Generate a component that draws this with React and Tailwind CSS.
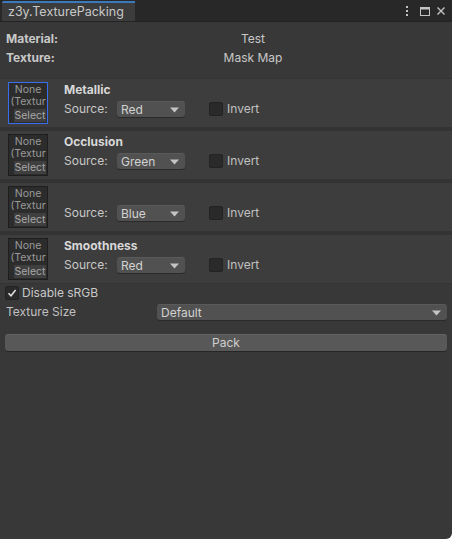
import { useState } from "react";

const channels = [
  { title: "Metallic", source: "Red", selected: true },
  { title: "Occlusion", source: "Green" },
  { title: "", source: "Blue" },
  { title: "Smoothness", source: "Red" },
];

function Arrow() {
  return (
    <svg width="9" height="6" viewBox="0 0 9 6" className="shrink-0">
      <path d="M0 0.5 L9 0.5 L4.5 5.5 Z" fill="#c4c4c4" />
    </svg>
  );
}

function Dropdown({ value, className }) {
  return (
    <div
      className={`flex h-[16px] items-center justify-between rounded-[3px] border-t border-[#5a5a5a] bg-[#515151] pl-[4px] pr-[6px] text-[#d2d2d2] shadow-[0_1px_0_#2a2a2a] ${className}`}
    >
      <span className="leading-none">{value}</span>
      <Arrow />
    </div>
  );
}

function Checkbox({ checked }) {
  return (
    <div className="flex h-[14px] w-[14px] items-center justify-center rounded-[2px] border border-[#232323] bg-[#2a2a2a]">
      {checked && (
        <svg width="10" height="10" viewBox="0 0 10 10">
          <path d="M1.5 5.2 L4 7.8 L8.6 2" stroke="#e0e0e0" strokeWidth="1.5" fill="none" />
        </svg>
      )}
    </div>
  );
}

function Thumb({ selected }) {
  return (
    <div
      className={`relative flex h-[42px] w-[40px] shrink-0 flex-col items-center overflow-hidden border bg-[#2c2c2c] text-[10.5px] leading-[12px] text-[#9a9a9a] ${
        selected ? "border-[#3a6ef0]" : "border-[#1e1e1e]"
      }`}
    >
      <span className="mt-[1px]">None</span>
      <span className="whitespace-nowrap">(Textur</span>
      <div className="absolute bottom-[1px] right-[1px] left-[5px] flex h-[13px] items-center justify-center bg-[#3f3f3f] text-[#a8a8a8]">
        Select
      </div>
    </div>
  );
}

function ChannelRow({ channel }) {
  return (
    <div className="flex h-[48px] items-center bg-[#3d3d3d] pl-[8px]">
      <Thumb selected={channel.selected} />
      <div className="ml-[16px] flex flex-col self-start pt-[3px]">
        <div className="h-[16px] font-bold leading-[16px] text-[#d8d8d8]">
          {channel.title}
        </div>
        <div className="mt-[3px] flex h-[16px] items-center">
          <span className="w-[53px] text-[#c8c8c8]">Source:</span>
          <Dropdown value={channel.source} className="w-[68px]" />
          <div className="ml-[24px]">
            <Checkbox />
          </div>
          <span className="ml-[4px] text-[#c0c0c0]">Invert</span>
        </div>
      </div>
    </div>
  );
}

export default function App() {
  const [srgb] = useState(true);

  return (
    <div
      className="flex h-[539px] w-[452px] flex-col overflow-hidden rounded-br-[6px] bg-[#383838] text-[12px] text-[#c4c4c4]"
      style={{ fontFamily: "Inter, 'Noto Sans', sans-serif" }}
    >
      {/* title bar */}
      <div className="flex h-[22px] shrink-0 items-end justify-between border-b border-[#232323] bg-[#282828]">
        <div className="ml-[2px] flex h-[20px] w-[133px] flex-col rounded-tl-[3px] bg-[#3c3c3c]">
          <div className="h-[2px] rounded-tl-[3px] bg-[#3a79bb]" />
          <span className="pl-[6px] pt-[1px] text-[12.5px] leading-[16px] text-[#c8c8c8]">
            z3y.TexturePacking
          </span>
        </div>
        <div className="mb-[5px] mr-[7px] flex items-center">
          <svg width="2" height="10" viewBox="0 0 2 10">
            <rect x="0" y="0" width="2" height="2" fill="#c4c4c4" />
            <rect x="0" y="4" width="2" height="2" fill="#c4c4c4" />
            <rect x="0" y="8" width="2" height="2" fill="#c4c4c4" />
          </svg>
          <svg width="10" height="9" viewBox="0 0 10 9" className="ml-[12px]">
            <rect x="0.5" y="0.5" width="9" height="8" stroke="#c4c4c4" fill="none" />
            <rect x="0.5" y="0.5" width="9" height="2" fill="#c4c4c4" />
          </svg>
          <svg width="8" height="8" viewBox="0 0 8 8" className="ml-[7px]">
            <path d="M0.5 0.5 L7.5 7.5 M7.5 0.5 L0.5 7.5" stroke="#c4c4c4" strokeWidth="1.4" />
          </svg>
        </div>
      </div>

      {/* material info */}
      <div className="flex flex-col px-[6px] pt-[7px]">
        <div className="flex h-[19px] items-center">
          <span className="w-[54px] font-bold text-[#c8c8c8]">Material:</span>
          <span className="flex-1 text-center text-[#c8c8c8]">Test</span>
        </div>
        <div className="flex h-[19px] items-center">
          <span className="w-[54px] font-bold text-[#c8c8c8]">Texture:</span>
          <span className="flex-1 text-center text-[#c8c8c8]">Mask Map</span>
        </div>
      </div>

      {/* channels */}
      <div className="mt-[11px] flex flex-col gap-[4px] bg-[#333333] py-[1px]">
        {channels.map((c, i) => (
          <ChannelRow key={i} channel={c} />
        ))}
      </div>

      {/* options */}
      <div className="flex h-[18px] items-center pl-[5px]">
        <Checkbox checked={srgb} />
        <span className="ml-[3px] text-[#c8c8c8]">Disable sRGB</span>
      </div>
      <div className="mt-[1px] flex h-[18px] items-center pl-[6px] pr-[5px]">
        <span className="w-[151px] text-[#c0c0c0]">Texture Size</span>
        <Dropdown value="Default" className="flex-1" />
      </div>
      <div className="mx-[5px] mt-[13px] flex h-[17px] items-center justify-center rounded-[3px] border-t border-[#636363] bg-[#585858] text-[#d0d0d0] shadow-[0_1px_0_#262626]">
        Pack
      </div>
    </div>
  );
}
